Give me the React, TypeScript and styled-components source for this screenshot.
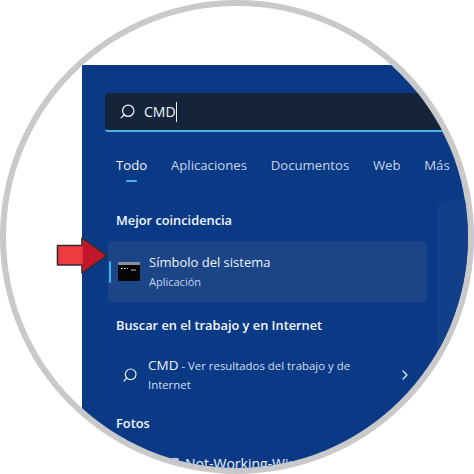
import React from "react";
import styled, { createGlobalStyle } from "styled-components";
import { Search, ChevronRight } from "lucide-react";

const Global = createGlobalStyle`
  html, body { margin: 0; padding: 0; background: #fff; }
  body { font-family: "Open Sans", "Noto Sans", sans-serif; color: #fff; }
`;

const Stage = styled.div`
  position: relative;
  width: 474px;
  height: 474px;
  overflow: hidden;
`;

const Lens = styled.div`
  box-sizing: border-box;
  width: 474px;
  height: 474px;
  border-radius: 50%;
  border: 6px solid #c9c9c9;
  background: #fff;
  overflow: hidden;
  padding: 59px 0 0 76px;
`;

const Panel = styled.section`
  box-sizing: border-box;
  width: 520px;
  height: 480px;
  background: #0a3a86;
  padding: 28px 0 0 23px;
`;

const SearchBar = styled.div`
  box-sizing: border-box;
  height: 39px;
  display: flex;
  align-items: center;
  gap: 8px;
  padding-left: 14px;
  background: #16243b;
  border-radius: 3px 0 0 3px;
  border-bottom: 2px solid #4bb4ea;
`;

const GlassIcon = styled(Search)<{ $size: number }>`
  width: ${(p) => p.$size}px;
  height: ${(p) => p.$size}px;
  transform: scaleX(-1);
  color: #eef2f8;
  flex: none;
`;

const Query = styled.span`
  font-size: 14px;
  color: #f2f4f8;
  border-right: 1px solid #f2f4f8;
  line-height: 20px;
`;

const Tabs = styled.nav`
  display: flex;
  gap: 23.7px;
  padding: 23px 0 0 11px;
  height: 46px;
`;

const Tab = styled.span<{ $active?: boolean }>`
  position: relative;
  font-size: 13.2px;
  line-height: 20px;
  height: 20px;
  white-space: nowrap;
  color: ${(p) => (p.$active ? "#f4f6fa" : "#c6d3e8")};
  font-weight: ${(p) => (p.$active ? 500 : 400)};
  &::after {
    content: "";
    display: ${(p) => (p.$active ? "block" : "none")};
    position: absolute;
    left: 10px;
    top: 25px;
    width: 11px;
    height: 2px;
    border-radius: 1px;
    background: #4bb4ea;
  }
`;

const Body = styled.div`
  display: flex;
`;

const Results = styled.div`
  width: 332px;
  flex: none;
`;

const SidePane = styled.aside`
  flex: 1;
  height: 150px;
  background: #123f88;
  border-radius: 6px 0 0 6px;
`;

const Heading = styled.h3<{ $top: number }>`
  margin: ${(p) => p.$top}px 0 0 11px;
  font-size: 12.8px;
  line-height: 18px;
  font-weight: 600;
  color: #f4f6fa;
`;

const BestCard = styled.div`
  box-sizing: border-box;
  position: relative;
  margin: 12px 0 0 3px;
  width: 319px;
  height: 61px;
  background: #1b4587;
  border-radius: 4px;
  display: flex;
  align-items: center;
  padding-left: 10px;
  gap: 9px;
  &::before {
    content: "";
    position: absolute;
    left: 1px;
    top: 20px;
    width: 2px;
    height: 22px;
    border-radius: 1px;
    background: #41b4f0;
  }
`;

const CardText = styled.div`
  display: flex;
  flex-direction: column;
  gap: 3px;
  margin-top: -1px;
`;

const CardTitle = styled.span`
  font-size: 13px;
  line-height: 18px;
  color: #eef2f8;
`;

const CardSub = styled.span`
  font-size: 11px;
  line-height: 16px;
  color: #c6d3e8;
`;

const WebRow = styled.div`
  position: relative;
  display: flex;
  align-items: center;
  width: 319px;
  margin: 22px 0 0 3px;
  padding-left: 14px;
  gap: 10px;
`;

const WebText = styled.p`
  margin: 0;
  width: 225px;
  font-size: 11.4px;
  line-height: 19px;
  color: #d3deee;
`;

const WebTerm = styled.span`
  display: inline-block;
  font-size: 13.5px;
  line-height: 19px;
  color: #eef2f8;
`;

const Chevron = styled(ChevronRight)`
  position: absolute;
  left: 289px;
  top: 11px;
  width: 16px;
  height: 16px;
  color: #dfe6f2;
`;

const PhotoRow = styled.div`
  display: flex;
  align-items: center;
  gap: 6px;
  margin: 22px 0 0 62px;
  font-size: 14px;
  line-height: 20px;
  white-space: nowrap;
  color: #eef2f8;
`;

const PhotoIcon = styled.span`
  width: 12px;
  height: 12px;
  border-radius: 2px;
  background: #c9d4e6;
`;

const ArrowMark = styled.svg`
  position: absolute;
  left: 56px;
  top: 237px;
  width: 52px;
  height: 38px;
`;

const TerminalIcon = () => (
  <svg width="22" height="19" viewBox="0 0 22 19" style={{ flex: "none" }}>
    <rect x="0" y="0" width="22" height="19" rx="1.5" fill="#050505" />
    <rect x="0" y="0" width="22" height="3" rx="1" fill="#8d929a" />
    <path d="M3 6.500h2M6 6.500h2M9 6.500h1M13 8h5" stroke="#c9c9c9" strokeWidth="1.2" />
  </svg>
);

export default function App() {
  return (
    <Stage>
      <Global />
      <Lens>
        <Panel>
          <SearchBar>
            <GlassIcon $size={17} strokeWidth={1.8} />
            <Query>CMD</Query>
          </SearchBar>
          <Tabs>
            <Tab $active>Todo</Tab>
            <Tab>Aplicaciones</Tab>
            <Tab>Documentos</Tab>
            <Tab>Web</Tab>
            <Tab>Más</Tab>
          </Tabs>
          <Body>
            <Results>
              <Heading $top={10}>Mejor coincidencia</Heading>
              <BestCard>
                <TerminalIcon />
                <CardText>
                  <CardTitle>Símbolo del sistema</CardTitle>
                  <CardSub>Aplicación</CardSub>
                </CardText>
              </BestCard>
              <Heading $top={14}>Buscar en el trabajo y en Internet</Heading>
              <WebRow>
                <GlassIcon $size={16} strokeWidth={1.8} />
                <WebText>
                  <WebTerm>CMD</WebTerm> - Ver resultados del trabajo y de Internet
                </WebText>
                <Chevron strokeWidth={2} />
              </WebRow>
              <Heading $top={20}>Fotos</Heading>
              <PhotoRow>
                <PhotoIcon />
                Not-Working-Windows
              </PhotoRow>
            </Results>
            <SidePane />
          </Body>
        </Panel>
      </Lens>
      <ArrowMark viewBox="0 0 52 38">
        <path
          d="M1.500 8.500H26V1L50.500 18.500 26 36V28H1.500Z"
          fill="#ee3b40"
          stroke="#3a2a30"
          strokeWidth="1.6"
          strokeLinejoin="round"
        />
        <path d="M26.800 2.500L49 18.500 26.800 34.500Z" fill="#c2172a" />
      </ArrowMark>
    </Stage>
  );
}
